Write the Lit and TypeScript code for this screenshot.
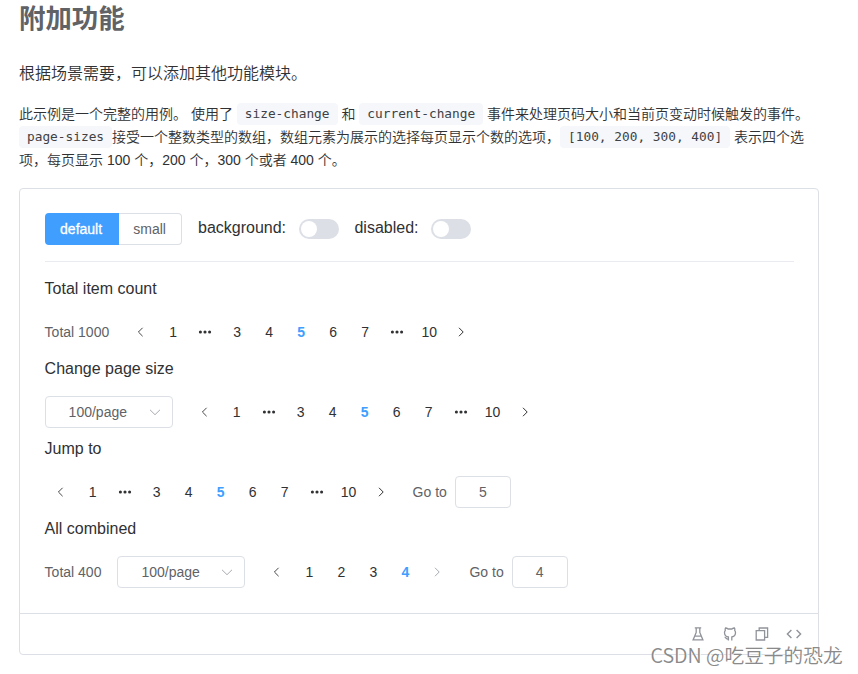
import { LitElement, html, css, svg, nothing } from "lit";
import { customElement, property } from "lit/decorators.js";

const stroke = (d: string) => svg`<path d=${d} fill="none" stroke="currentColor"></path>`;

@customElement("demo-switch")
class DemoSwitch extends LitElement {
  static styles = css`
    :host { display: block; width: 40px; height: 20px; box-sizing: border-box; padding: 2px; border-radius: 10px; background: #dcdfe6; }
    .knob { width: 16px; height: 16px; border-radius: 50%; background: #fff; }
  `;
  render() {
    return html`<div class="knob"></div>`;
  }
}

@customElement("demo-pagination")
class DemoPagination extends LitElement {
  @property({ type: Number }) total = 0;
  @property({ type: Boolean }) sizes = false;
  @property({ type: Boolean }) jumper = false;
  @property({ type: Boolean }) last = false;
  @property({ type: Number }) current = 1;
  @property({ attribute: false }) pages: number[] = [];

  static styles = css`
    :host { display: flex; align-items: center; height: 32px; font-size: 14px; color: #606266; }
    svg { display: block; }
    .total, .select { margin-right: 16px; }
    .select { box-sizing: border-box; width: 128px; height: 32px; border: 1px solid #dcdfe6; border-radius: 4px; display: flex; align-items: center; padding: 0 10px 0 23px; justify-content: space-between; }
    .select svg { color: #a8abb2; }
    .pager { display: flex; color: #303133; }
    .item { width: 32px; height: 32px; display: flex; align-items: center; justify-content: center; }
    .active { color: #409eff; font-weight: 700; }
    .off { color: #a8abb2; }
    .goto { margin-left: 16px; }
    .input { box-sizing: border-box; width: 56px; height: 32px; margin-left: 8px; border: 1px solid #dcdfe6; border-radius: 4px; display: flex; align-items: center; justify-content: center; }
  `;

  render() {
    return html`
      ${this.total ? html`<span class="total">Total ${this.total}</span>` : nothing}
      ${this.sizes
        ? html`<div class="select"><span>100/page</span><svg width="14" height="14" viewBox="0 0 14 14">${stroke("M2 4.8 7 9.7 12 4.8")}</svg></div>`
        : nothing}
      <div class="pager">
        <div class="item"><svg width="12" height="12" viewBox="0 0 12 12" stroke-width="0.9">${stroke("M7.6 1.8 3.4 6 7.6 10.2")}</svg></div>
        ${this.pages.map((p) =>
          p
            ? html`<div class="item ${p === this.current ? "active" : ""}">${p}</div>`
            : html`<div class="item"><svg width="14" height="14" viewBox="0 0 14 14" fill="currentColor"><circle cx="2.4" cy="7" r="1.55"></circle><circle cx="7" cy="7" r="1.55"></circle><circle cx="11.6" cy="7" r="1.55"></circle></svg></div>`
        )}
        <div class="item ${this.last ? "off" : ""}"><svg width="12" height="12" viewBox="0 0 12 12">${stroke("M4 1.8 8.2 6 4 10.2")}</svg></div>
      </div>
      ${this.jumper ? html`<span class="goto">Go to</span><div class="input">${this.current}</div>` : nothing}
    `;
  }
}

@customElement("app-root")
class AppRoot extends LitElement {
  static styles = css`
    :host { display: block; position: relative; box-sizing: border-box; height: 674px; overflow: hidden; padding: 1px 0 0 19px; background: #fff; color: #303133; font-family: "Liberation Sans", "Noto Sans CJK SC", sans-serif; }
    h2 { margin: 0; font-size: 26.4px; line-height: 36px; font-weight: 700; color: #606266; }
    p { margin: 0; font-weight: 350; }
    .intro { margin-top: 25px; font-size: 16px; line-height: 24px; }
    .desc { margin-top: 17px; font-size: 14px; line-height: 23px; white-space: nowrap; height: 69px; }
    code { font-family: "DejaVu Sans Mono", monospace; font-size: 12.8px; font-weight: 400; line-height: 22px; display: inline-block; height: 22px; padding: 0 8px; border-radius: 4px; background: #f5f7fa; color: #404144; vertical-align: top; }
    .card { margin-top: 16px; box-sizing: border-box; width: 800px; height: 467px; border: 1px solid #dcdfe6; border-radius: 4px; display: flex; flex-direction: column; }
    .body { padding: 24px 24px 0 24.6px; height: 400px; }
    .controls { display: flex; align-items: center; height: 32px; padding-bottom: 16px; border-bottom: 1px solid #e9ebf0; font-size: 16px; }
    .radio { display: flex; font-size: 14px; line-height: 32px; height: 32px; margin-right: 16.4px; }
    .radio div { box-sizing: border-box; text-align: center; }
    .on { width: 74px; padding-right: 1px; background: #409eff; color: #fff; border-radius: 4px 0 0 4px; -webkit-text-stroke: 0.3px #fff; }
    .alt { width: 63px; border: 1px solid #dcdfe6; border-left: 0; border-radius: 0 4px 4px 0; line-height: 30px; color: #606266; }
    .label { line-height: 24px; margin-bottom: 3px; }
    demo-switch { margin: 0 15.6px 0 12.8px; }
    .title { font-size: 16px; line-height: 24px; margin: 15px 0 15px; }
    .title ~ .title { margin-top: 9px; }
    .foot { flex: 1; border-top: 1px solid #dcdfe6; display: flex; align-items: center; justify-content: flex-end; gap: 16px; padding-right: 16px; color: #909399; }
    .foot svg { display: block; }
    .mark { position: absolute; left: 650.5px; top: 641px; font-family: "Noto Sans CJK SC", sans-serif; font-size: 19.7px; font-weight: 350; line-height: 28px; white-space: nowrap; color: #8a8a8a; text-shadow: 1px 1px 0 #fff; }
  `;

  render() {
    const many = [1, 0, 3, 4, 5, 6, 7, 0, 10];
    return html`
      <h2>附加功能</h2>
      <p class="intro">根据场景需要，可以添加其他功能模块。</p>
      <p class="desc">此示例是一个完整的用例。 使用了 <code>size-change</code> 和 <code>current-change</code> 事件来处理页码大小和当前页变动时候触发的事件。<br /><code>page-sizes</code>接受一个整数类型的数组，数组元素为展示的选择每页显示个数的选项，<code>[100, 200, 300, 400]</code> 表示四个选<br />项，每页显示 100 个，200 个，300 个或者 400 个。</p>
      <div class="card">
        <div class="body">
          <div class="controls">
            <div class="radio"><div class="on">default</div><div class="alt">small</div></div>
            <span class="label">background:</span><demo-switch></demo-switch>
            <span class="label">disabled:</span><demo-switch></demo-switch>
          </div>
          <div class="title">Total item count</div>
          <demo-pagination total="1000" current="5" .pages=${many}></demo-pagination>
          <div class="title">Change page size</div>
          <demo-pagination sizes current="5" .pages=${many}></demo-pagination>
          <div class="title">Jump to</div>
          <demo-pagination jumper current="5" .pages=${many}></demo-pagination>
          <div class="title">All combined</div>
          <demo-pagination total="400" sizes jumper last current="4" .pages=${[1, 2, 3, 4]}></demo-pagination>
        </div>
        <div class="foot">
          <svg width="16" height="16" viewBox="0 0 16 16" stroke-width="1.3">${stroke("M4.8 1.8H11.2M6.2 1.8V6.4L3.1 13.9H12.9L9.8 6.4V1.8M4.8 10.2H11.2")}</svg>
          <svg width="16" height="16" viewBox="0 0 16 16" stroke-width="1.3">${stroke("M6.4 14.6V11C4 10.6 2.5 9.2 2.5 6.8C2.5 5.7 2.8 5 3.3 4.4C3 3.4 3.1 2.6 3.5 2C4.5 2 5.4 2.4 6.1 3H9.9C10.6 2.4 11.5 2 12.5 2C12.9 2.6 13 3.4 12.7 4.4C13.2 5 13.5 5.7 13.5 6.8C13.5 9.2 12 10.6 9.8 11V14.6M6.4 13C4.3 13.4 4 11.5 2.6 11")}</svg>
          <svg width="16" height="16" viewBox="0 0 16 16" stroke-width="1.3">${stroke("M2.2 4.7H10.6V14H2.2ZM5.2 4.7V2H13.6V11.3H10.6")}</svg>
          <svg width="16" height="16" viewBox="0 0 16 16" stroke-width="1.4">${stroke("M5.4 4 1.4 8 5.4 12M10.6 4 14.6 8 10.6 12")}</svg>
        </div>
      </div>
      <div class="mark">CSDN @吃豆子的恐龙</div>
    `;
  }
}
